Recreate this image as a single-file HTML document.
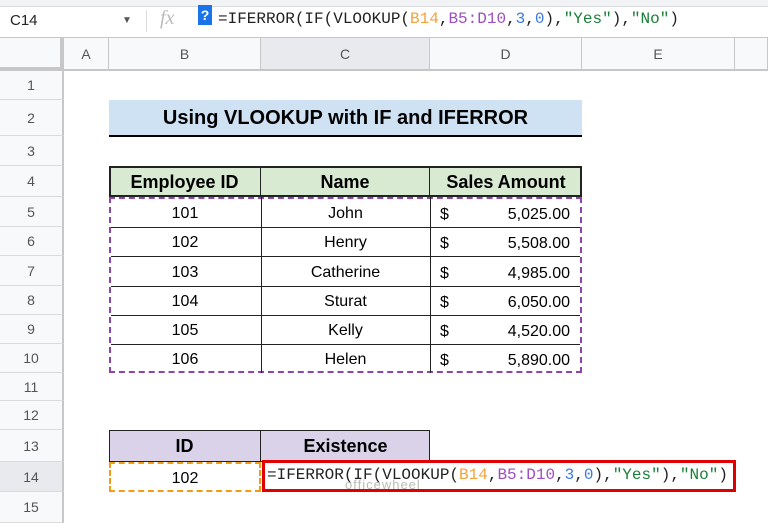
<!DOCTYPE html>
<html><head><style>
*{margin:0;padding:0;box-sizing:border-box}
body{width:768px;height:523px;overflow:hidden;background:#fff;font-family:"Liberation Sans",Arial,sans-serif;position:relative}
.a{position:absolute}
.mono{font-family:"Liberation Mono",monospace}
.rh{position:absolute;left:0;width:64px;background:#f8f9fa;border-right:2px solid #c7c7c7;border-bottom:1px solid #dadada;color:#555;font-size:14px;display:flex;align-items:center;justify-content:center}
.ch{position:absolute;top:38px;height:33px;background:#f8f9fa;border-right:1px solid #c7c7c7;border-bottom:2px solid #c7c7c7;color:#555;font-size:14px;display:flex;align-items:center;justify-content:center}
.c{position:absolute;display:flex;align-items:center;justify-content:center;font-size:16px;color:#000;padding-top:3px}
.hd{font-weight:bold;font-size:18px;padding-top:1px}
.m{position:absolute;font-size:16px;margin-top:2px}
</style></head><body>
<div class="a" style="left:0;top:0;width:768px;height:6px;background:#f1f3f4"></div>
<div class="a" style="left:0;top:6px;width:768px;height:32px;background:#fff;border-top:1px solid #dadce0;border-bottom:1px solid #c7c7c7"></div>
<div class="a" style="left:10px;top:12px;font-size:15px;color:#222">C14</div>
<div class="a" style="left:122px;top:15px;font-size:10px;color:#555">▼</div>
<div class="a" style="left:146px;top:10px;width:1px;height:22px;background:#dadce0"></div>
<div class="a" style="left:160px;top:7px;font-size:20px;color:#bbb;font-style:italic;font-family:'Liberation Serif',serif">fx</div>
<div class="a" style="left:198px;top:5px;width:14px;height:20px;background:#1a73e8;color:#fff;font-weight:bold;font-size:14px;text-align:center;line-height:20px">?</div>
<div class="a mono" style="left:218px;top:10px;font-size:16px;color:#222;white-space:nowrap">=IFERROR(IF(VLOOKUP(<span style="color:#f4a23b">B14</span>,<span style="color:#9c4fbf">B5:D10</span>,<span style="color:#3b78e7">3</span>,<span style="color:#3b78e7">0</span>),<span style="color:#188038">"Yes"</span>),<span style="color:#188038">"No"</span>)</div>

<div class="a" style="left:0;top:38px;width:64px;height:33px;background:#f8f9fa;border-right:4px solid #c7c7c7;border-bottom:4px solid #c7c7c7"></div>
<div class="ch" style="left:64px;width:45px">A</div>
<div class="ch" style="left:109px;width:152px">B</div>
<div class="ch" style="left:261px;width:169px;background:#e8eaed">C</div>
<div class="ch" style="left:430px;width:152px">D</div>
<div class="ch" style="left:582px;width:153px">E</div>
<div class="ch" style="left:735px;width:33px"></div>

<div class="rh" style="top:71px;height:29px">1</div>
<div class="rh" style="top:100px;height:36px">2</div>
<div class="rh" style="top:136px;height:30px">3</div>
<div class="rh" style="top:166px;height:31px">4</div>
<div class="rh" style="top:197px;height:30px">5</div>
<div class="rh" style="top:227px;height:29px">6</div>
<div class="rh" style="top:256px;height:30px">7</div>
<div class="rh" style="top:286px;height:29px">8</div>
<div class="rh" style="top:315px;height:29px">9</div>
<div class="rh" style="top:344px;height:29px">10</div>
<div class="rh" style="top:373px;height:28px">11</div>
<div class="rh" style="top:401px;height:29px">12</div>
<div class="rh" style="top:430px;height:32px">13</div>
<div class="rh" style="top:462px;height:30px;background:#e8eaed">14</div>
<div class="rh" style="top:492px;height:31px">15</div>

<div class="c hd" style="left:109px;top:100px;width:473px;height:37px;background:#cfe2f3;border-bottom:2px solid #000;font-size:20px">Using VLOOKUP with IF and IFERROR</div>

<div class="a" style="left:109px;top:166px;width:473px;height:31px;background:#d9ead3;border:2px solid #222"></div>
<div class="c hd" style="left:109px;top:166px;width:152px;height:31px;border-right:1px solid #222">Employee ID</div>
<div class="c hd" style="left:261px;top:166px;width:169px;height:31px;border-right:1px solid #222">Name</div>
<div class="c hd" style="left:430px;top:166px;width:152px;height:31px">Sales Amount</div>

<div class="a" style="left:109px;top:197px;width:473px;height:176px;border:2px dashed #8e44ad"></div>
<div class="a" style="left:261px;top:197px;width:1px;height:176px;background:#222"></div>
<div class="a" style="left:430px;top:197px;width:1px;height:176px;background:#222"></div>
<div class="a" style="left:111px;top:227px;width:469px;height:1px;background:#222"></div>
<div class="a" style="left:111px;top:256px;width:469px;height:1px;background:#222"></div>
<div class="a" style="left:111px;top:286px;width:469px;height:1px;background:#222"></div>
<div class="a" style="left:111px;top:315px;width:469px;height:1px;background:#222"></div>
<div class="a" style="left:111px;top:344px;width:469px;height:1px;background:#222"></div>

<div class="c" style="left:109px;top:197px;width:152px;height:30px">101</div><div class="c" style="left:261px;top:197px;width:169px;height:30px">John</div><div class="m" style="left:440px;top:204px">$</div><div class="m" style="left:440px;top:204px;width:130px;text-align:right">5,025.00</div>
<div class="c" style="left:109px;top:227px;width:152px;height:29px">102</div><div class="c" style="left:261px;top:227px;width:169px;height:29px">Henry</div><div class="m" style="left:440px;top:233px">$</div><div class="m" style="left:440px;top:233px;width:130px;text-align:right">5,508.00</div>
<div class="c" style="left:109px;top:256px;width:152px;height:30px">103</div><div class="c" style="left:261px;top:256px;width:169px;height:30px">Catherine</div><div class="m" style="left:440px;top:263px">$</div><div class="m" style="left:440px;top:263px;width:130px;text-align:right">4,985.00</div>
<div class="c" style="left:109px;top:286px;width:152px;height:29px">104</div><div class="c" style="left:261px;top:286px;width:169px;height:29px">Sturat</div><div class="m" style="left:440px;top:292px">$</div><div class="m" style="left:440px;top:292px;width:130px;text-align:right">6,050.00</div>
<div class="c" style="left:109px;top:315px;width:152px;height:29px">105</div><div class="c" style="left:261px;top:315px;width:169px;height:29px">Kelly</div><div class="m" style="left:440px;top:321px">$</div><div class="m" style="left:440px;top:321px;width:130px;text-align:right">4,520.00</div>
<div class="c" style="left:109px;top:344px;width:152px;height:29px">106</div><div class="c" style="left:261px;top:344px;width:169px;height:29px">Helen</div><div class="m" style="left:440px;top:350px">$</div><div class="m" style="left:440px;top:350px;width:130px;text-align:right">5,890.00</div>

<div class="a" style="left:109px;top:430px;width:321px;height:32px;background:#d9d2e9;border:1px solid #222"></div>
<div class="c hd" style="left:109px;top:430px;width:152px;height:32px;border-right:1px solid #222">ID</div>
<div class="c hd" style="left:261px;top:430px;width:169px;height:32px">Existence</div>
<div class="c" style="left:109px;top:462px;width:152px;height:30px;border:2px dashed #f39c12">102</div>
<div class="a" style="left:262px;top:460px;width:474px;height:32px;border:3px solid #e00000;background:#fff"></div>
<div class="a mono" style="left:267px;top:466px;font-size:16px;color:#222;white-space:nowrap">=IFERROR(IF(VLOOKUP(<span style="color:#f4a23b">B14</span>,<span style="color:#9c4fbf">B5:D10</span>,<span style="color:#3b78e7">3</span>,<span style="color:#3b78e7">0</span>),<span style="color:#188038">"Yes"</span>),<span style="color:#188038">"No"</span>)</div>
<div class="a" style="left:345px;top:477px;font-size:13px;color:#bbb;letter-spacing:1px">officewheel</div>
</body></html>
